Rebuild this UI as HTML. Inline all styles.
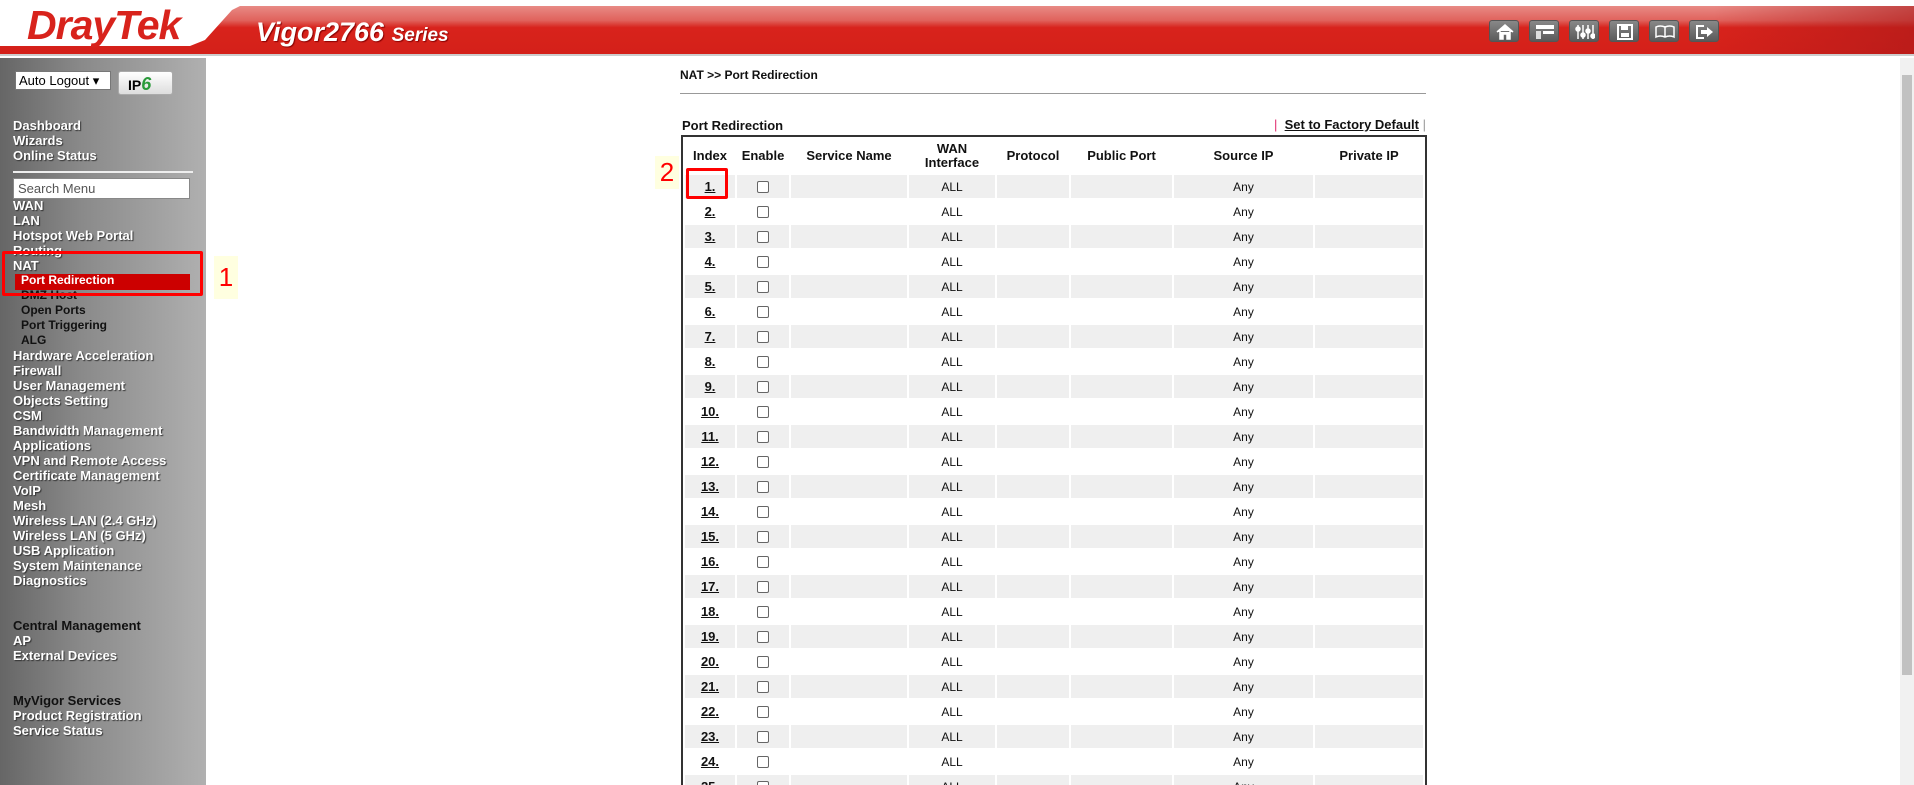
<!DOCTYPE html>
<html><head><meta charset="utf-8"><style>
*{margin:0;padding:0;box-sizing:border-box}
html,body{width:1914px;height:785px;overflow:hidden}
body{background:#fff;font-family:"Liberation Sans",Arial,sans-serif}
#wrap{position:relative;width:1914px;height:785px;overflow:hidden}
#hdr{position:absolute;left:0;top:0;width:1914px;height:56px;background:#fff;border-bottom:2px solid #ccc}
#red{position:absolute;left:0;top:6px;width:1914px;height:48px;background:linear-gradient(#e88a85 0%,#e0625c 30%,#d8231c 45%,#d42019 100%)}
#redr{position:absolute;right:0;top:6px;width:200px;height:48px;background:linear-gradient(90deg,rgba(180,30,30,0),rgba(170,25,25,.6))}
#white{position:absolute;left:0;top:0;width:300px;height:46px;background:#fff;clip-path:polygon(0 0,252px 0,232px 10px,205px 40px,190px 46px,0 46px)}
#logo{position:absolute;left:27px;top:2px;font:italic bold 41px "Liberation Sans",sans-serif;color:#d8231c;letter-spacing:-1px}
#series{position:absolute;left:256px;top:17px;font:italic bold 27px "Liberation Sans",sans-serif;color:#fff;text-shadow:1px 1px 1px #800}
#series small{font-size:19px}
.ic{position:absolute;top:20px;width:30px;height:22px;background:linear-gradient(#888,#5a5a5a);border-radius:3px;border:1px solid #555}
.ic svg{position:absolute;left:5px;top:3px}
#side{position:absolute;left:0;top:58px;width:206px;height:727px;background:linear-gradient(90deg,#666 0%,#8a8a8a 40%,#b0b0b0 100%)}
#sel{position:absolute;left:15px;top:71px;width:96px;height:19px;background:#fff;border:1px solid #777;font-size:13px;padding:1px 3px}
#ipv6{position:absolute;left:118px;top:71px;width:55px;height:24px;background:linear-gradient(#fff,#ddd);border:1px solid #aaa;border-radius:3px;font:bold 14px "Liberation Sans";padding:2px 9px}
#ipv6 b{color:#2a9a3a;font-style:italic;font-size:18px}
.m{position:absolute;left:13px;font:bold 13px/15px "Liberation Sans",sans-serif;color:#fff;text-shadow:1px 1px 1px #333}
.m div{height:15px;white-space:nowrap}
.k{color:#111;text-shadow:none}
.sub{padding-left:8px;color:#111;text-shadow:none;font-size:12px}
#srch{position:absolute;left:13px;top:178px;width:177px;height:21px;background:#fff;border:1px solid #888;font-size:13px;color:#555;padding:2px 4px}
#sep{position:absolute;left:13px;top:171px;width:180px;height:2px;background:#eee}
#hl{position:absolute;left:15px;top:274px;width:175px;height:16px;background:#c00}
#box1{position:absolute;left:2px;top:251px;width:201px;height:45px;border:3px solid #f00;border-radius:2px}
.lab{position:absolute;background:#ffffe0;color:#f00;font:26px "Liberation Sans";text-align:center}
#crumb{position:absolute;left:680px;top:68px;font:bold 12px "Liberation Sans";color:#111}
#hr{position:absolute;left:680px;top:93px;width:746px;height:1px;background:#999}
#pt{position:absolute;left:682px;top:118px;font:bold 13px "Liberation Sans";color:#111}
#fd{position:absolute;right:488px;top:117px;font:bold 13px "Liberation Sans";color:#111}
#fd span{color:#e03070;font-weight:normal}
table{position:absolute;left:681px;top:135px;width:746px;border:2px solid #333;border-spacing:2px;table-layout:fixed;font:12px "Liberation Sans",sans-serif;color:#111}
th{height:34px;font:bold 13px/14px "Liberation Sans";text-align:center}
td{height:23px;text-align:center}
tr.g td{background:#efefef}
td.i{font-weight:bold;text-decoration:underline;font-size:13px}
.cb{display:inline-block;width:12px;height:12px;border:1px solid #666;border-radius:2px;background:#fff;vertical-align:middle}
#box2{position:absolute;left:686px;top:168px;width:42px;height:31px;border:3px solid #f00;border-radius:2px}
#sb{position:absolute;left:1900px;top:58px;width:14px;height:727px;background:#f1f1f1}
#sb div{position:absolute;left:2px;top:17px;width:10px;height:600px;background:#c1c1c1}
</style></head><body><div id="wrap">
<div id="hdr"><div id="red"></div><div id="redr"></div><div id="white"></div>
<div id="logo">DrayTek</div>
<div id="series">Vigor2766 <small>Series</small></div>
<div class="ic" style="left:1489px"><svg width="20" height="16"><path d="M2 8 L10 1 L18 8 M5 7 V15 H8 V10 H12 V15 H15 V7" fill="#fff" stroke="#fff" stroke-width="1.5"/></svg></div>
<div class="ic" style="left:1529px"><svg width="20" height="16"><rect x="1" y="1" width="18" height="4" fill="#fff"/><rect x="1" y="7" width="5" height="8" fill="#ddd"/><rect x="8" y="7" width="11" height="3" fill="#fff"/></svg></div>
<div class="ic" style="left:1569px"><svg width="20" height="16" stroke="#fff" stroke-width="1.5"><path d="M3 1V15M8 1V15M13 1V15M18 1V15"/><circle cx="3" cy="5" r="2" fill="#fff"/><circle cx="8" cy="11" r="2" fill="#fff"/><circle cx="13" cy="7" r="2" fill="#fff"/><circle cx="18" cy="12" r="2" fill="#fff"/></svg></div>
<div class="ic" style="left:1609px"><svg width="20" height="16"><rect x="3" y="1" width="14" height="14" fill="none" stroke="#fff" stroke-width="2"/><rect x="6" y="2" width="7" height="4" fill="#fff"/><rect x="6" y="9" width="8" height="4" fill="#fff"/></svg></div>
<div class="ic" style="left:1649px"><svg width="20" height="16"><path d="M1 3 Q5 1 10 3 Q15 1 19 3 V13 Q15 11 10 13 Q5 11 1 13Z M10 3 V13" fill="none" stroke="#fff" stroke-width="1.5"/></svg></div>
<div class="ic" style="left:1689px"><svg width="20" height="16"><path d="M9 2 H2 V14 H9" fill="none" stroke="#fff" stroke-width="2"/><path d="M6 6 H12 V3 L18 8 L12 13 V10 H6Z" fill="#fff"/></svg></div>
</div>
<div id="side"></div>
<div id="sel">Auto Logout ▾</div>
<div id="ipv6">IP<b>6</b></div>
<div class="m" style="top:118px"><div>Dashboard</div><div>Wizards</div><div>Online Status</div></div>
<div id="sep"></div>
<div id="srch">Search Menu</div>
<div id="hl"></div>
<div class="m" style="top:198px">
<div>WAN</div><div>LAN</div><div>Hotspot Web Portal</div><div>Routing</div><div>NAT</div>
<div class="sub" style="color:#fff">Port Redirection</div><div class="sub">DMZ Host</div><div class="sub">Open Ports</div><div class="sub">Port Triggering</div><div class="sub">ALG</div>
<div>Hardware Acceleration</div><div>Firewall</div><div>User Management</div><div>Objects Setting</div><div>CSM</div><div>Bandwidth Management</div><div>Applications</div><div>VPN and Remote Access</div><div>Certificate Management</div><div>VoIP</div><div>Mesh</div><div>Wireless LAN (2.4 GHz)</div><div>Wireless LAN (5 GHz)</div><div>USB Application</div><div>System Maintenance</div><div>Diagnostics</div>
<div></div><div></div><div class="k">Central Management</div><div>AP</div><div>External Devices</div><div></div><div></div><div class="k">MyVigor Services</div><div>Product Registration</div><div>Service Status</div>
</div>
<div id="box1"></div>
<div class="lab" style="left:214px;top:256px;width:24px;height:43px;line-height:43px">1</div>
<div id="crumb">NAT &gt;&gt; Port Redirection</div>
<div id="hr"></div>
<div id="pt">Port Redirection</div>
<div id="fd"><span>|</span>&nbsp; <u>Set to Factory Default</u> <span style="color:#999">|</span></div>
<table>
<colgroup><col style="width:50px"><col style="width:52px"><col style="width:116px"><col style="width:86px"><col style="width:72px"><col style="width:101px"><col style="width:139px"><col></colgroup>
<tr><th>Index</th><th>Enable</th><th>Service Name</th><th>WAN<br>Interface</th><th>Protocol</th><th>Public Port</th><th>Source IP</th><th>Private IP</th></tr>
<tr class="g"><td class="i">1.</td><td><span class="cb"></span></td><td></td><td>ALL</td><td></td><td></td><td>Any</td><td></td></tr>
<tr><td class="i">2.</td><td><span class="cb"></span></td><td></td><td>ALL</td><td></td><td></td><td>Any</td><td></td></tr>
<tr class="g"><td class="i">3.</td><td><span class="cb"></span></td><td></td><td>ALL</td><td></td><td></td><td>Any</td><td></td></tr>
<tr><td class="i">4.</td><td><span class="cb"></span></td><td></td><td>ALL</td><td></td><td></td><td>Any</td><td></td></tr>
<tr class="g"><td class="i">5.</td><td><span class="cb"></span></td><td></td><td>ALL</td><td></td><td></td><td>Any</td><td></td></tr>
<tr><td class="i">6.</td><td><span class="cb"></span></td><td></td><td>ALL</td><td></td><td></td><td>Any</td><td></td></tr>
<tr class="g"><td class="i">7.</td><td><span class="cb"></span></td><td></td><td>ALL</td><td></td><td></td><td>Any</td><td></td></tr>
<tr><td class="i">8.</td><td><span class="cb"></span></td><td></td><td>ALL</td><td></td><td></td><td>Any</td><td></td></tr>
<tr class="g"><td class="i">9.</td><td><span class="cb"></span></td><td></td><td>ALL</td><td></td><td></td><td>Any</td><td></td></tr>
<tr><td class="i">10.</td><td><span class="cb"></span></td><td></td><td>ALL</td><td></td><td></td><td>Any</td><td></td></tr>
<tr class="g"><td class="i">11.</td><td><span class="cb"></span></td><td></td><td>ALL</td><td></td><td></td><td>Any</td><td></td></tr>
<tr><td class="i">12.</td><td><span class="cb"></span></td><td></td><td>ALL</td><td></td><td></td><td>Any</td><td></td></tr>
<tr class="g"><td class="i">13.</td><td><span class="cb"></span></td><td></td><td>ALL</td><td></td><td></td><td>Any</td><td></td></tr>
<tr><td class="i">14.</td><td><span class="cb"></span></td><td></td><td>ALL</td><td></td><td></td><td>Any</td><td></td></tr>
<tr class="g"><td class="i">15.</td><td><span class="cb"></span></td><td></td><td>ALL</td><td></td><td></td><td>Any</td><td></td></tr>
<tr><td class="i">16.</td><td><span class="cb"></span></td><td></td><td>ALL</td><td></td><td></td><td>Any</td><td></td></tr>
<tr class="g"><td class="i">17.</td><td><span class="cb"></span></td><td></td><td>ALL</td><td></td><td></td><td>Any</td><td></td></tr>
<tr><td class="i">18.</td><td><span class="cb"></span></td><td></td><td>ALL</td><td></td><td></td><td>Any</td><td></td></tr>
<tr class="g"><td class="i">19.</td><td><span class="cb"></span></td><td></td><td>ALL</td><td></td><td></td><td>Any</td><td></td></tr>
<tr><td class="i">20.</td><td><span class="cb"></span></td><td></td><td>ALL</td><td></td><td></td><td>Any</td><td></td></tr>
<tr class="g"><td class="i">21.</td><td><span class="cb"></span></td><td></td><td>ALL</td><td></td><td></td><td>Any</td><td></td></tr>
<tr><td class="i">22.</td><td><span class="cb"></span></td><td></td><td>ALL</td><td></td><td></td><td>Any</td><td></td></tr>
<tr class="g"><td class="i">23.</td><td><span class="cb"></span></td><td></td><td>ALL</td><td></td><td></td><td>Any</td><td></td></tr>
<tr><td class="i">24.</td><td><span class="cb"></span></td><td></td><td>ALL</td><td></td><td></td><td>Any</td><td></td></tr>
<tr class="g"><td class="i">25.</td><td><span class="cb"></span></td><td></td><td>ALL</td><td></td><td></td><td>Any</td><td></td></tr>
</table>
<div id="box2"></div>
<div class="lab" style="left:655px;top:156px;width:24px;height:33px;line-height:33px">2</div>
<div id="sb"><div></div></div>
</div></body></html>
